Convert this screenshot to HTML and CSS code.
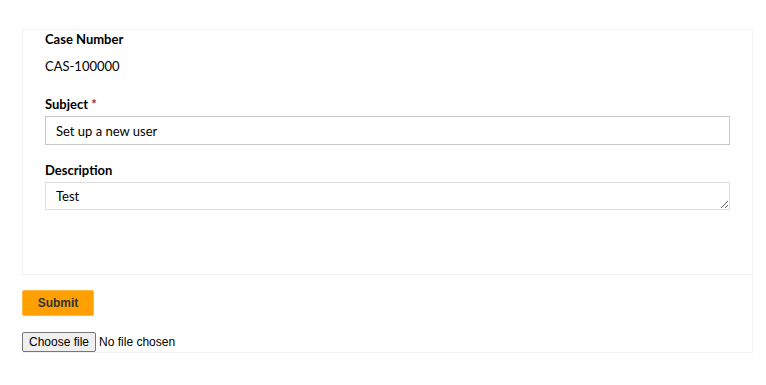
FILE: index.html
```html
<!DOCTYPE html>
<html lang="en">
  <head>
    <meta charset="UTF-8" />
    <title>Case</title>
    <link rel="stylesheet" href="styles.css">
  </head>
  <body>
    <div class="case-form">
      <div class="form-section">
        <div class="field">
          <label class="field-label">Case Number</label>
          <div class="field-value">CAS-100000</div>
        </div>
        <div class="field">
          <label class="field-label" for="subject">Subject <span class="required">*</span></label>
          <input id="subject" class="text-input" type="text" value="Set up a new user">
        </div>
        <div class="field field-tight">
          <label class="field-label" for="description">Description</label>
          <textarea id="description" class="text-area">Test</textarea>
        </div>
      </div>
      <div class="actions">
        <button class="submit-btn" type="button">Submit</button>
        <label class="file-picker">
          <input class="file-input" type="file">
          <span class="file-btn">Choose file</span>
          <span class="file-name">No file chosen</span>
        </label>
      </div>
    </div>
  </body>
</html>
```

FILE: styles.css
```css
* {
  box-sizing: border-box;
}

body {
  margin: 0;
  padding: 29px 13px 0 22px;
  background: #fff;
  font-family: "Lato", "Open Sans", sans-serif;
  font-size: 13px;
  color: #000;
}

.case-form {
  border: 1px solid #f3f3f3;
  border-left: none;
}

.form-section {
  padding: 0 22px 64px 22px;
  border-bottom: 1px solid #efefef;
  border-left: 1px solid #f3f3f3;
}

.field {
  display: flex;
  flex-direction: column;
}

.field + .field {
  margin-top: 20px;
}

.field-tight {
  margin-top: 16px !important;
}

.field-label {
  font-weight: bold;
  line-height: 18px;
}

.required {
  color: #a4262c;
}

.field-value {
  margin-top: 9px;
  line-height: 18px;
}

.text-input,
.text-area {
  margin-top: 3px;
  width: 100%;
  font-family: inherit;
  font-size: 13px;
  color: #000;
  padding: 0 10px;
  background: #fff;
}

.text-input {
  height: 29px;
  border: 1px solid #c8c8c8;
}

.text-area {
  height: 28px;
  border: 1px solid #dcdcdc;
  padding-top: 5px;
  resize: vertical;
  display: block;
}

.actions {
  display: flex;
  flex-direction: column;
  align-items: flex-start;
  gap: 16px;
  padding-top: 15px;
}

.submit-btn {
  width: 72px;
  height: 26px;
  background: #ffa000;
  border: 1px solid #ffb840;
  border-radius: 2px;
  color: #333;
  font-family: "Liberation Sans", Arial, sans-serif;
  font-weight: bold;
  font-size: 12px;
  cursor: pointer;
}

.file-picker {
  display: flex;
  align-items: center;
  gap: 3px;
  font-family: "Liberation Sans", Arial, sans-serif;
  font-size: 12px;
  color: #000;
  cursor: pointer;
}

.file-input {
  display: none;
}

.file-btn {
  display: inline-block;
  height: 20px;
  line-height: 18px;
  padding: 0 6px;
  background: #efefef;
  border: 1px solid #767676;
  border-radius: 2px;
}
```
